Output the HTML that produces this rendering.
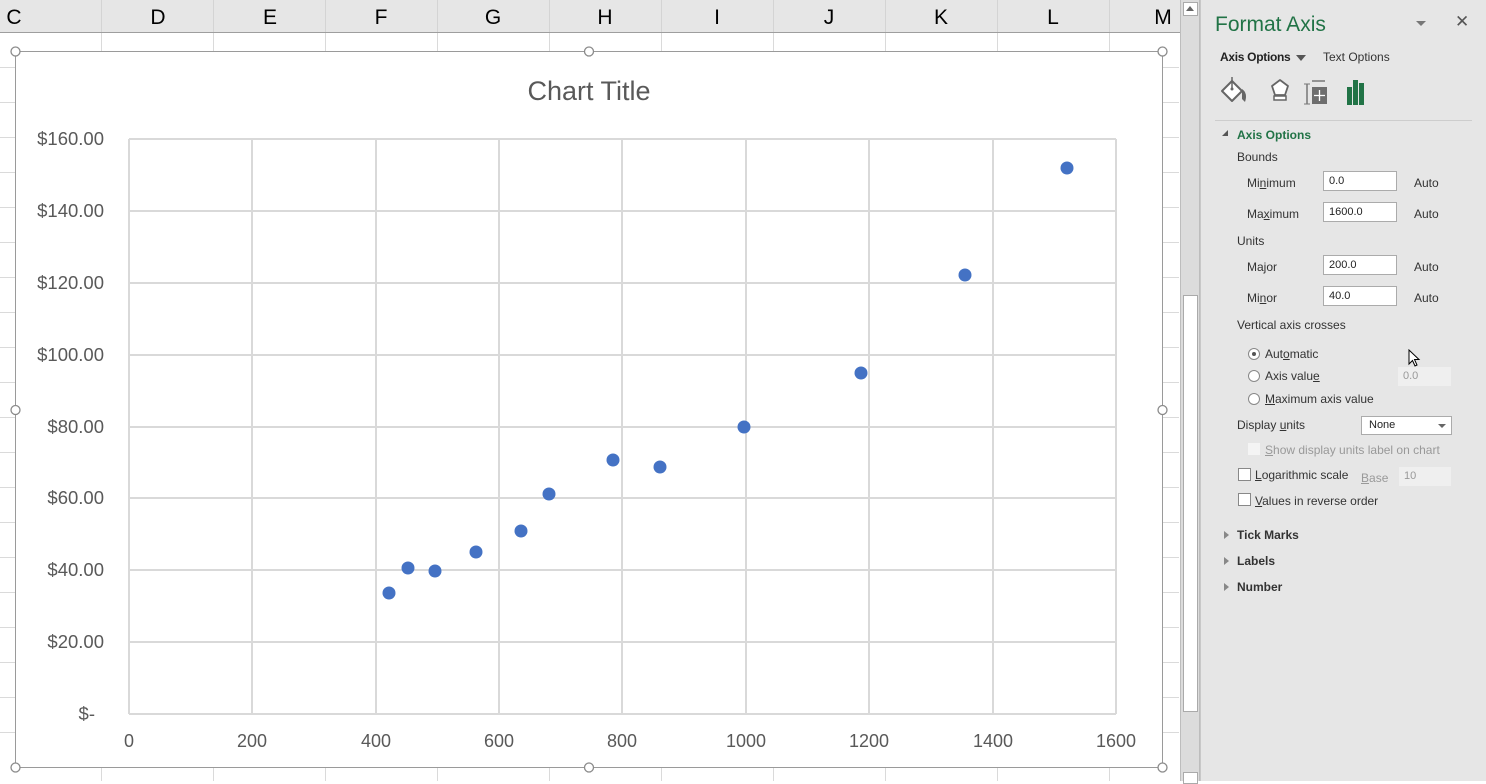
<!DOCTYPE html>
<html><head><meta charset="utf-8"><style>
*{margin:0;padding:0;box-sizing:border-box}
body{width:1486px;height:781px;overflow:hidden;background:#fff;position:relative;font-family:"Liberation Sans",sans-serif}
.a{position:absolute}
.p{font-family:"Liberation Sans",sans-serif;font-size:12px;color:#333;white-space:nowrap}
.inp{position:absolute;background:#fff;border:1px solid #ababab;font-size:11px;padding:0 5px;line-height:18px;height:20px;color:#222}
.rad{position:absolute;width:12px;height:12px;border:1px solid #888;border-radius:50%;background:#fff}
.chk{position:absolute;width:13px;height:13px;border:1px solid #888;background:#fff}
u{text-decoration:underline}
</style></head><body>
<svg class="a" style="left:0;top:0" width="1180" height="781">
<rect x="0" y="0" width="1180" height="32" fill="#e6e6e6"/>
<line x1="0" y1="32.5" x2="1180" y2="32.5" stroke="#9e9e9e"/>
<g stroke="#d4d4d4">
<line x1="101.5" y1="0" x2="101.5" y2="32"/><line x1="213.5" y1="0" x2="213.5" y2="32"/><line x1="325.5" y1="0" x2="325.5" y2="32"/><line x1="437.5" y1="0" x2="437.5" y2="32"/><line x1="549.5" y1="0" x2="549.5" y2="32"/><line x1="661.5" y1="0" x2="661.5" y2="32"/><line x1="773.5" y1="0" x2="773.5" y2="32"/><line x1="885.5" y1="0" x2="885.5" y2="32"/><line x1="997.5" y1="0" x2="997.5" y2="32"/><line x1="1109.5" y1="0" x2="1109.5" y2="32"/>
</g>
<g stroke="#dadada">
<line x1="101.5" y1="33" x2="101.5" y2="51"/><line x1="213.5" y1="33" x2="213.5" y2="51"/><line x1="325.5" y1="33" x2="325.5" y2="51"/><line x1="437.5" y1="33" x2="437.5" y2="51"/><line x1="549.5" y1="33" x2="549.5" y2="51"/><line x1="661.5" y1="33" x2="661.5" y2="51"/><line x1="773.5" y1="33" x2="773.5" y2="51"/><line x1="885.5" y1="33" x2="885.5" y2="51"/><line x1="997.5" y1="33" x2="997.5" y2="51"/><line x1="1109.5" y1="33" x2="1109.5" y2="51"/>
<line x1="101.5" y1="767" x2="101.5" y2="781"/><line x1="213.5" y1="767" x2="213.5" y2="781"/><line x1="325.5" y1="767" x2="325.5" y2="781"/><line x1="437.5" y1="767" x2="437.5" y2="781"/><line x1="549.5" y1="767" x2="549.5" y2="781"/><line x1="661.5" y1="767" x2="661.5" y2="781"/><line x1="773.5" y1="767" x2="773.5" y2="781"/><line x1="885.5" y1="767" x2="885.5" y2="781"/><line x1="997.5" y1="767" x2="997.5" y2="781"/><line x1="1109.5" y1="767" x2="1109.5" y2="781"/>
<line x1="0" y1="67.5" x2="15" y2="67.5"/><line x1="0" y1="102.5" x2="15" y2="102.5"/><line x1="0" y1="137.5" x2="15" y2="137.5"/><line x1="0" y1="172.5" x2="15" y2="172.5"/><line x1="0" y1="207.5" x2="15" y2="207.5"/><line x1="0" y1="242.5" x2="15" y2="242.5"/><line x1="0" y1="277.5" x2="15" y2="277.5"/><line x1="0" y1="312.5" x2="15" y2="312.5"/><line x1="0" y1="347.5" x2="15" y2="347.5"/><line x1="0" y1="382.5" x2="15" y2="382.5"/><line x1="0" y1="417.5" x2="15" y2="417.5"/><line x1="0" y1="452.5" x2="15" y2="452.5"/><line x1="0" y1="487.5" x2="15" y2="487.5"/><line x1="0" y1="522.5" x2="15" y2="522.5"/><line x1="0" y1="557.5" x2="15" y2="557.5"/><line x1="0" y1="592.5" x2="15" y2="592.5"/><line x1="0" y1="627.5" x2="15" y2="627.5"/><line x1="0" y1="662.5" x2="15" y2="662.5"/><line x1="0" y1="697.5" x2="15" y2="697.5"/><line x1="0" y1="732.5" x2="15" y2="732.5"/>
<line x1="1163" y1="67.5" x2="1179" y2="67.5"/><line x1="1163" y1="102.5" x2="1179" y2="102.5"/><line x1="1163" y1="137.5" x2="1179" y2="137.5"/><line x1="1163" y1="172.5" x2="1179" y2="172.5"/><line x1="1163" y1="207.5" x2="1179" y2="207.5"/><line x1="1163" y1="242.5" x2="1179" y2="242.5"/><line x1="1163" y1="277.5" x2="1179" y2="277.5"/><line x1="1163" y1="312.5" x2="1179" y2="312.5"/><line x1="1163" y1="347.5" x2="1179" y2="347.5"/><line x1="1163" y1="382.5" x2="1179" y2="382.5"/><line x1="1163" y1="417.5" x2="1179" y2="417.5"/><line x1="1163" y1="452.5" x2="1179" y2="452.5"/><line x1="1163" y1="487.5" x2="1179" y2="487.5"/><line x1="1163" y1="522.5" x2="1179" y2="522.5"/><line x1="1163" y1="557.5" x2="1179" y2="557.5"/><line x1="1163" y1="592.5" x2="1179" y2="592.5"/><line x1="1163" y1="627.5" x2="1179" y2="627.5"/><line x1="1163" y1="662.5" x2="1179" y2="662.5"/><line x1="1163" y1="697.5" x2="1179" y2="697.5"/><line x1="1163" y1="732.5" x2="1179" y2="732.5"/>
</g>
<g font-family="Liberation Sans" font-size="21" fill="#000" text-anchor="middle">
<text x="14" y="24">C</text><text x="158" y="24">D</text><text x="270" y="24">E</text><text x="381" y="24">F</text><text x="493" y="24">G</text><text x="605" y="24">H</text><text x="717" y="24">I</text><text x="829" y="24">J</text><text x="941" y="24">K</text><text x="1053" y="24">L</text><text x="1163" y="24">M</text>
</g>
<rect x="15.5" y="51.5" width="1147" height="716" fill="#fff" stroke="#9a9a9a"/>
<g stroke="#d9d9d9" stroke-width="2">
<line x1="129" y1="139" x2="1116" y2="139"/><line x1="129" y1="211" x2="1116" y2="211"/><line x1="129" y1="283" x2="1116" y2="283"/><line x1="129" y1="355" x2="1116" y2="355"/><line x1="129" y1="427" x2="1116" y2="427"/><line x1="129" y1="498" x2="1116" y2="498"/><line x1="129" y1="570" x2="1116" y2="570"/><line x1="129" y1="642" x2="1116" y2="642"/><line x1="129" y1="714" x2="1116" y2="714"/>
<line x1="129" y1="139" x2="129" y2="714"/><line x1="252" y1="139" x2="252" y2="714"/><line x1="376" y1="139" x2="376" y2="714"/><line x1="499" y1="139" x2="499" y2="714"/><line x1="622" y1="139" x2="622" y2="714"/><line x1="746" y1="139" x2="746" y2="714"/><line x1="869" y1="139" x2="869" y2="714"/><line x1="993" y1="139" x2="993" y2="714"/><line x1="1116" y1="139" x2="1116" y2="714"/>
</g>
<text x="589" y="100" font-size="27" fill="#595959" text-anchor="middle" font-family="Liberation Sans">Chart Title</text>
<g font-size="18.5" fill="#595959" text-anchor="end" font-family="Liberation Sans">
<text x="104" y="145">$160.00</text><text x="104" y="217">$140.00</text><text x="104" y="289">$120.00</text><text x="104" y="361">$100.00</text><text x="104" y="433">$80.00</text><text x="104" y="504">$60.00</text><text x="104" y="576">$40.00</text><text x="104" y="648">$20.00</text><text x="95" y="720">$-</text>
</g>
<g font-size="18" fill="#595959" text-anchor="middle" font-family="Liberation Sans">
<text x="129" y="747">0</text><text x="252" y="747">200</text><text x="376" y="747">400</text><text x="499" y="747">600</text><text x="622" y="747">800</text><text x="746" y="747">1000</text><text x="869" y="747">1200</text><text x="993" y="747">1400</text><text x="1116" y="747">1600</text>
</g>
<g fill="#4472c4">
<circle cx="389" cy="593" r="6.5"/><circle cx="408" cy="568" r="6.5"/><circle cx="435" cy="571" r="6.5"/><circle cx="476" cy="552" r="6.5"/><circle cx="521" cy="531" r="6.5"/><circle cx="549" cy="494" r="6.5"/><circle cx="613" cy="460" r="6.5"/><circle cx="660" cy="467" r="6.5"/><circle cx="744" cy="427" r="6.5"/><circle cx="861" cy="373" r="6.5"/><circle cx="965" cy="275" r="6.5"/><circle cx="1067" cy="168" r="6.5"/>
</g>
<g fill="#fff" stroke="#8a8a8a" stroke-width="1.3">
<circle cx="15.5" cy="51.5" r="4.5"/><circle cx="589" cy="51.5" r="4.5"/><circle cx="1162.5" cy="51.5" r="4.5"/><circle cx="15.5" cy="410" r="4.5"/><circle cx="1162.5" cy="410" r="4.5"/><circle cx="15.5" cy="767.5" r="4.5"/><circle cx="589" cy="767.5" r="4.5"/><circle cx="1162.5" cy="767.5" r="4.5"/>
</g>
</svg>
<!-- scrollbar -->
<div class="a" style="left:1180px;top:0;width:20px;height:781px;background:#dcdcdc;border-left:1px solid #bdbdbd;border-right:1px solid #bdbdbd"></div>
<div class="a" style="left:1183px;top:2px;width:15px;height:14px;background:#fff;border:1px solid #aaa"></div>
<div class="a" style="left:1186px;top:6px;width:0;height:0;border-left:4px solid transparent;border-right:4px solid transparent;border-bottom:5px solid #666"></div>
<div class="a" style="left:1183px;top:295px;width:15px;height:417px;background:#fff;border:1px solid #aaa"></div>
<div class="a" style="left:1183px;top:772px;width:15px;height:12px;background:#fff;border:1px solid #aaa"></div>
<!-- panel -->
<div class="a" style="left:1200px;top:0;width:286px;height:781px;background:#e6e6e6;border-left:1px solid #c8c8c8"></div>
<div class="a" style="left:1215px;top:13px;font-size:21px;color:#217346">Format Axis</div>
<div class="a" style="left:1416px;top:21px;width:0;height:0;border-left:5px solid transparent;border-right:5px solid transparent;border-top:5px solid #777"></div>
<div class="a" style="left:1455px;top:12px;font-size:17px;color:#555">✕</div>
<div class="a p" style="left:1220px;top:50px;font-weight:bold;color:#222;letter-spacing:-0.3px">Axis Options</div>
<div class="a" style="left:1296px;top:55px;width:0;height:0;border-left:5px solid transparent;border-right:5px solid transparent;border-top:6px solid #555"></div>
<div class="a p" style="left:1323px;top:50px">Text Options</div>
<svg class="a" style="left:1215px;top:75px" width="160" height="50">
<path d="M7 16 L17 6 L27 16 L17 26 Z" fill="#fff" stroke="#666" stroke-width="2" stroke-linejoin="round"/>
<path d="M27 14 Q33 18 30 27 L27 24 Z" fill="#666"/>
<line x1="17" y1="2" x2="17" y2="13" stroke="#666" stroke-width="1.5"/>
<circle cx="17" cy="14" r="1.5" fill="#666"/>
<path d="M57 11 L65 5 L73 11 L70 20 L60 20 Z" fill="#fff" stroke="#666" stroke-width="1.8" stroke-linejoin="round"/>
<path d="M59 21 L71 21 L71 25 L59 25 Z" fill="#fff" stroke="#666" stroke-width="1.5"/>
<line x1="92" y1="9" x2="92" y2="29" stroke="#777" stroke-width="1.5"/>
<line x1="89" y1="9" x2="95" y2="9" stroke="#777"/><line x1="89" y1="29" x2="95" y2="29" stroke="#777"/>
<line x1="97" y1="6" x2="110" y2="6" stroke="#777" stroke-width="1.5"/>
<rect x="97" y="12" width="15" height="17" fill="#6e6e6e"/>
<path d="M104.5 15v11M99 20.5h11" stroke="#fff" stroke-width="1.3"/>
<rect x="132" y="12" width="5" height="18" fill="#217346"/>
<rect x="138" y="5" width="5" height="25" fill="#217346"/>
<rect x="144" y="8" width="5" height="22" fill="#217346"/>
</svg>
<div class="a" style="left:1215px;top:120px;width:257px;height:1px;background:#cdcdcd"></div>
<div class="a" style="left:1222px;top:130px;width:0;height:0;border-left:6px solid transparent;border-bottom:6px solid #555"></div>
<div class="a p" style="left:1237px;top:128px;font-weight:bold;color:#217346">Axis Options</div>
<div class="a p" style="left:1237px;top:150px">Bounds</div>
<div class="a p" style="left:1247px;top:176px">Mi<u>n</u>imum</div>
<div class="inp" style="left:1323px;top:171px;width:74px">0.0</div>
<div class="a p" style="left:1414px;top:176px">Auto</div>
<div class="a p" style="left:1247px;top:207px">Ma<u>x</u>imum</div>
<div class="inp" style="left:1323px;top:202px;width:74px">1600.0</div>
<div class="a p" style="left:1414px;top:207px">Auto</div>
<div class="a p" style="left:1237px;top:234px">Units</div>
<div class="a p" style="left:1247px;top:260px">Ma<u>j</u>or</div>
<div class="inp" style="left:1323px;top:255px;width:74px">200.0</div>
<div class="a p" style="left:1414px;top:260px">Auto</div>
<div class="a p" style="left:1247px;top:291px">Mi<u>n</u>or</div>
<div class="inp" style="left:1323px;top:286px;width:74px">40.0</div>
<div class="a p" style="left:1414px;top:291px">Auto</div>
<div class="a p" style="left:1237px;top:318px">Vertical axis crosses</div>
<div class="rad" style="left:1248px;top:348px"></div><div class="a" style="left:1252px;top:352px;width:4px;height:4px;border-radius:50%;background:#555"></div>
<div class="a p" style="left:1265px;top:347px">Aut<u>o</u>matic</div>
<div class="rad" style="left:1248px;top:370px"></div>
<div class="a p" style="left:1265px;top:369px">Axis valu<u>e</u></div>
<div class="a" style="left:1398px;top:367px;width:53px;height:19px;background:#efefef;font-size:11px;color:#999;padding:3px 5px">0.0</div>
<div class="rad" style="left:1248px;top:393px"></div>
<div class="a p" style="left:1265px;top:392px"><u>M</u>aximum axis value</div>
<svg class="a" style="left:1408px;top:349px" width="14" height="20"><path d="M1 1 L1 15 L4.5 11.5 L7 17 L9 16 L6.5 10.5 L11 10.5 Z" fill="#fff" stroke="#000"/></svg>
<div class="a p" style="left:1237px;top:418px">Display <u>u</u>nits</div>
<div class="inp" style="left:1361px;top:416px;width:91px;height:19px;font-size:11px;line-height:17px;padding:0 7px">None</div>
<div class="a" style="left:1438px;top:424px;width:0;height:0;border-left:4px solid transparent;border-right:4px solid transparent;border-top:4px solid #666"></div>
<div class="a" style="left:1248px;top:443px;width:12px;height:12px;background:#f4f4f4"></div>
<div class="a p" style="left:1265px;top:443px;color:#999"><u>S</u>how display units label on chart</div>
<div class="chk" style="left:1238px;top:468px"></div>
<div class="a p" style="left:1255px;top:468px"><u>L</u>ogarithmic scale</div>
<div class="a p" style="left:1361px;top:471px;color:#999"><u>B</u>ase</div>
<div class="a" style="left:1399px;top:467px;width:52px;height:19px;background:#efefef;font-size:11px;color:#999;padding:3px 5px">10</div>
<div class="chk" style="left:1238px;top:493px"></div>
<div class="a p" style="left:1255px;top:494px"><u>V</u>alues in reverse order</div>
<div class="a" style="left:1224px;top:531px;width:0;height:0;border-top:4px solid transparent;border-bottom:4px solid transparent;border-left:5px solid #888"></div>
<div class="a p" style="left:1237px;top:528px;font-weight:bold">Tick Marks</div>
<div class="a" style="left:1224px;top:557px;width:0;height:0;border-top:4px solid transparent;border-bottom:4px solid transparent;border-left:5px solid #888"></div>
<div class="a p" style="left:1237px;top:554px;font-weight:bold">Labels</div>
<div class="a" style="left:1224px;top:583px;width:0;height:0;border-top:4px solid transparent;border-bottom:4px solid transparent;border-left:5px solid #888"></div>
<div class="a p" style="left:1237px;top:580px;font-weight:bold">Number</div>
</body></html>
